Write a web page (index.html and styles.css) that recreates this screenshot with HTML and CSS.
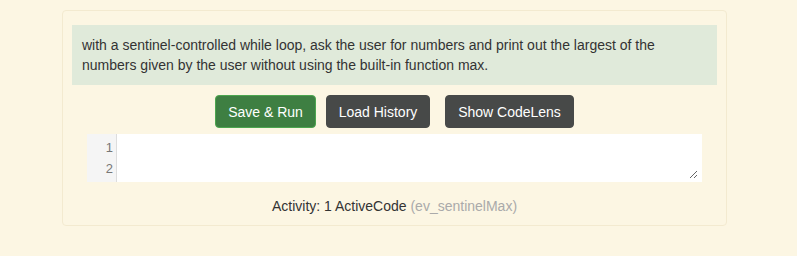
FILE: index.html
```html
<!DOCTYPE html>
<html>
<head>
<meta charset="utf-8">
<link rel="stylesheet" href="styles.css">
</head>
<body>
<div class="card">
  <div class="prompt">with a sentinel-controlled while loop, ask the user for numbers and print out the largest of the numbers given by the user without using the built-in function max.</div>
  <div class="controls">
    <button class="btn btn-run">Save &amp; Run</button>
    <button class="btn btn-dark btn-history">Load History</button>
    <button class="btn btn-dark btn-lens">Show CodeLens</button>
  </div>
  <div class="editor">
    <div class="gutter">
      <div class="ln">1</div>
      <div class="ln">2</div>
    </div>
    <div class="code"></div>
  </div>
  <div class="caption">Activity: 1 ActiveCode <span class="ident">(ev_sentinelMax)</span></div>
</div>
</body>
</html>
```

FILE: styles.css
```css
html, body {
  margin: 0;
  padding: 0;
  background: #fcf6e3;
}
body {
  font-family: "Liberation Sans", Arial, sans-serif;
  font-size: 14px;
  line-height: 20px;
  color: #333;
  padding: 10px 0 0 62px;
}
.card {
  box-sizing: border-box;
  width: 665px;
  height: 216px;
  border: 1px solid #f3ead0;
  border-radius: 4px;
  background: #fcf6e3;
  padding: 14px 9px 0 9px;
}
.prompt {
  background: #e0eada;
  padding: 10px 10px 10px 10px;
  color: #333;
}
.controls {
  display: flex;
  justify-content: center;
  margin-top: 10px;
}
.btn {
  box-sizing: border-box;
  height: 33px;
  font-family: "Liberation Sans", Arial, sans-serif;
  font-size: 14px;
  color: #fff;
  border-radius: 4px;
  padding: 0;
  white-space: nowrap;
  cursor: pointer;
}
.btn-run {
  width: 101px;
  background: #3e7f42;
  border: 1px solid #4ca64f;
}
.btn-dark {
  background: #474948;
  border: 1px solid #474948;
}
.btn-history {
  width: 104px;
  margin-left: 10px;
}
.btn-lens {
  width: 129px;
  margin-left: 15px;
}
.editor {
  display: flex;
  margin: 6px 15px 0 15px;
  height: 48px;
  background: #fff;
}
.gutter {
  width: 29px;
  background: #f5f5f5;
  border-right: 1px solid #ddd;
  padding-top: 3px;
  box-sizing: content-box;
}
.ln {
  text-align: right;
  padding-right: 3px;
  color: #777;
  font-size: 13px;
  line-height: 21px;
}
.code {
  flex: 1;
  margin: 0 4px 3px 0;
  overflow: hidden;
  resize: vertical;
}
.caption {
  text-align: center;
  margin-top: 14px;
  color: #333;
}
.ident {
  color: #aaa;
}
```
